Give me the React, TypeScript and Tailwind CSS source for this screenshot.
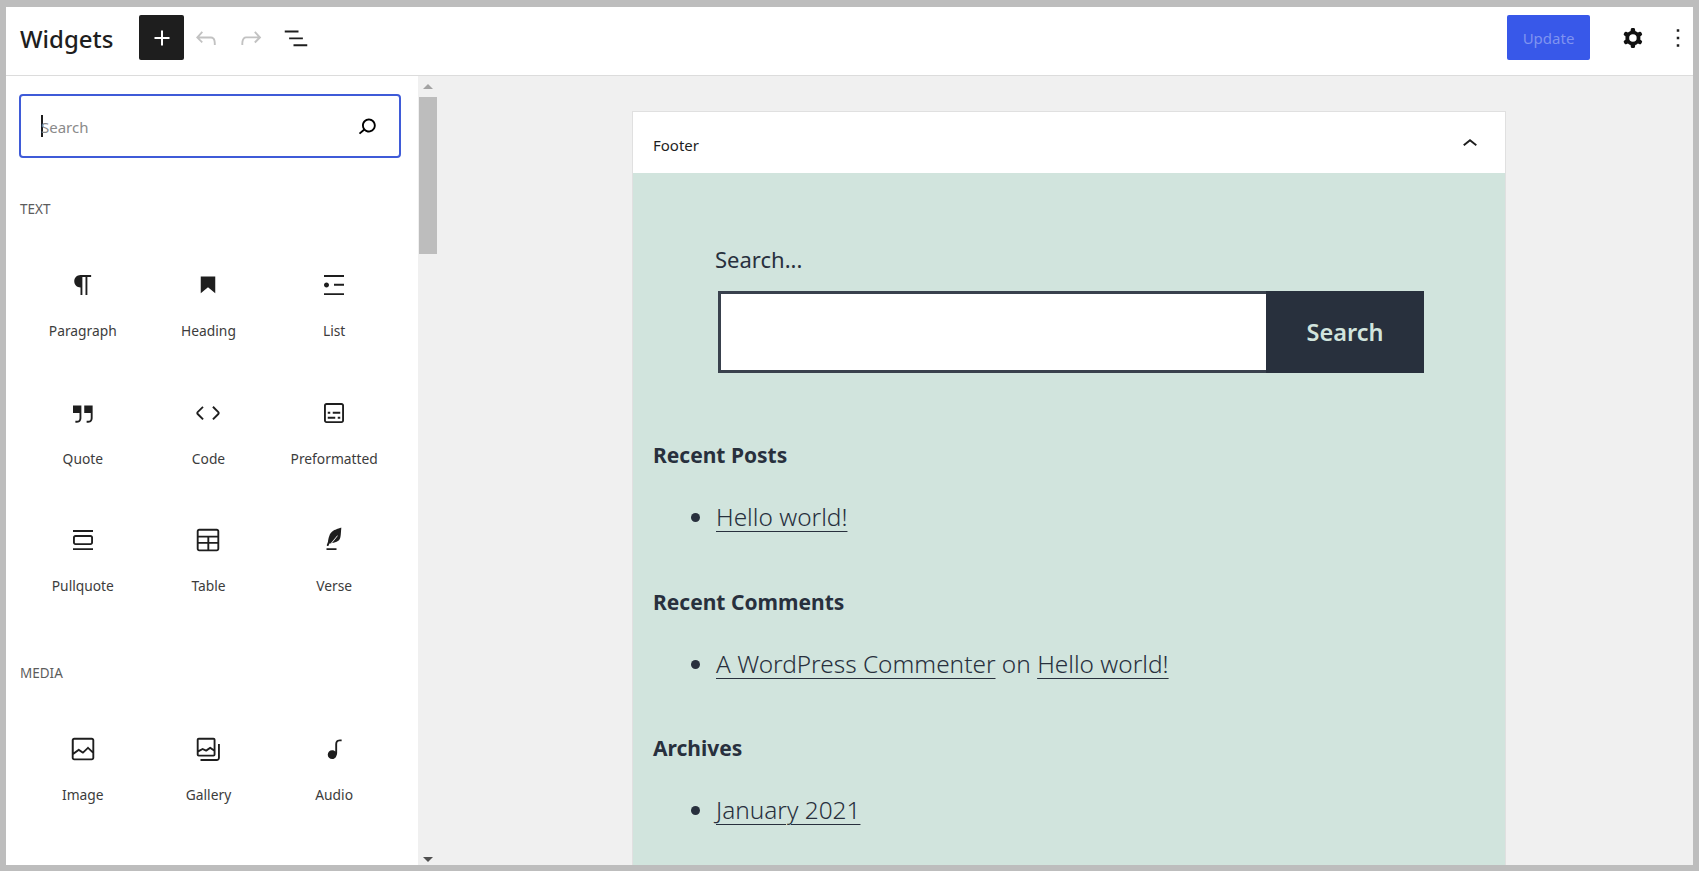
import type { ReactNode } from 'react';

const font = { ui: "font-['Noto_Sans','Liberation_Sans',sans-serif]" };

function Icon({ d, className = 'fill-[#1e1e1e]', evenodd }: { d: string; className?: string; evenodd?: boolean }) {
  return (
    <svg viewBox="0 0 24 24" className={`h-[30px] w-[30px] shrink-0 ${className}`}>
      <path d={d} fillRule={evenodd ? 'evenodd' : undefined} clipRule={evenodd ? 'evenodd' : undefined} />
    </svg>
  );
}

const icons = {
  plus: 'M18 11.2h-5.2V6h-1.6v5.2H6v1.6h5.2V18h1.6v-5.2H18z',
  undo: 'M18.3 11.7c-.6-.6-1.4-.9-2.3-.9H6.7l2.9-3.3-1.1-1-4.5 5L8.5 16l1-1-2.7-2.7H16c.5 0 .9.2 1.3.5 1 1 1 3.4 1 4.5v.3h1.5v-.2c0-1.5 0-4.3-1.5-5.7z',
  redo: 'M15.6 6.5l-1.1 1 2.9 3.3H8c-.9 0-1.7.3-2.3.9-1.4 1.5-1.4 4.2-1.4 5.6v.2h1.5v-.3c0-1.1 0-3.5 1-4.5.3-.3.7-.5 1.3-.5h9.2L14.5 15l1.1 1.1 4.6-4.6-4.6-5z',
  listView: 'M3 6h11v1.5H3V6Zm3.5 5.5h11V13h-11v-1.5ZM21 17H10v1.5h11V17Z',
  gear: 'M10.289 4.836A1 1 0 0 1 11.275 4h1.306a1 1 0 0 1 .987.836l.244 1.466c.787.26 1.503.679 2.108 1.218l1.393-.522a1 1 0 0 1 1.216.437l.653 1.13a1 1 0 0 1-.23 1.273l-1.148.944a6.025 6.025 0 0 1 0 2.435l1.149.946a1 1 0 0 1 .23 1.272l-.653 1.13a1 1 0 0 1-1.216.437l-1.394-.522c-.605.54-1.32.958-2.108 1.218l-.244 1.466a1 1 0 0 1-.987.836h-1.306a1 1 0 0 1-.986-.836l-.244-1.466a5.995 5.995 0 0 1-2.108-1.218l-1.394.522a1 1 0 0 1-1.217-.436l-.653-1.131a1 1 0 0 1 .23-1.272l1.149-.946a6.026 6.026 0 0 1 0-2.435l-1.148-.944a1 1 0 0 1-.23-1.272l.653-1.131a1 1 0 0 1 1.217-.437l1.393.522a5.994 5.994 0 0 1 2.108-1.218l.244-1.466ZM14.929 12a3 3 0 1 1-6 0 3 3 0 0 1 6 0Z',
  more: 'M13 19h-2v-2h2v2zm0-6h-2v-2h2v2zm0-6h-2V5h2v2z',
  search: 'M13.5 6C10.5 6 8 8.5 8 11.5c0 1.1.3 2.1.9 3l-3.4 3 1 1.1 3.4-2.9c1 .9 2.2 1.4 3.6 1.4 3 0 5.5-2.5 5.5-5.5C19 8.5 16.5 6 13.5 6zm0 9.5c-2.2 0-4-1.8-4-4s1.8-4 4-4 4 1.8 4 4-1.8 4-4 4z',
  chevronUp: 'M6.5 12.4L12 8l5.5 4.4-.9 1.2L12 10l-4.5 3.6-1-1.2z',
  paragraph: 'm9.99609 14v-.2251l.00391.0001v6.225h1.5v-14.5h2.5v14.5h1.5v-14.5h3v-1.5h-8.50391c-2.76142 0-5 2.23858-5 5 0 2.7614 2.23858 5 5 5z',
  heading: 'M6.2 5.2v13.4l5.8-4.8 5.8 4.8V5.2z',
  list: 'M4 4v1.5h16V4H4zm8 8.5h8V11h-8v1.5zM4 20h16v-1.5H4V20zm4-8c0-1.1-.9-2-2-2s-2 .9-2 2 .9 2 2 2 2-.9 2-2z',
  quote: 'M13 6v6h5.2v4c0 .8-.2 1.4-.5 1.7-.6.6-1.6.6-2.5.5h-.3v1.5h.5c1 0 2.3-.1 3.3-1 .6-.6 1-1.6 1-2.8V6H13zm-9 6h5.2v4c0 .8-.2 1.4-.5 1.7-.6.6-1.6.6-2.5.5h-.3v1.5h.5c1 0 2.3-.1 3.3-1 .6-.6 1-1.6 1-2.8V6H4v6z',
  code: 'M20.8 10.7l-4.3-4.3-1.1 1.1 4.3 4.3c.1.1.1.3 0 .4l-4.3 4.3 1.1 1.1 4.3-4.3c.7-.8.7-1.9 0-2.6zM4.2 11.8l4.3-4.3-1-1-4.3 4.3c-.7.7-.7 1.8 0 2.5l4.3 4.3 1.1-1.1-4.3-4.3c-.2-.1-.2-.3-.1-.4z',
  preformatted: 'M18 4H6c-1.1 0-2 .9-2 2v12c0 1.1.9 2 2 2h12c1.1 0 2-.9 2-2V6c0-1.1-.9-2-2-2zm.5 14c0 .3-.2.5-.5.5H6c-.3 0-.5-.2-.5-.5V6c0-.3.2-.5.5-.5h12c.3 0 .5.2.5.5v12zM7 16.5h6V15H7v1.5zm4-4h6V11h-6v1.5zM9 11H7v1.5h2V11zm6 5.5h2V15h-2v1.5z',
  pullquote: 'M18 8H6c-1.1 0-2 .9-2 2v4c0 1.1.9 2 2 2h12c1.1 0 2-.9 2-2v-4c0-1.1-.9-2-2-2zm.5 6c0 .3-.2.5-.5.5H6c-.3 0-.5-.2-.5-.5v-4c0-.3.2-.5.5-.5h12c.3 0 .5.2.5.5v4zM4 4v1.5h16V4H4zm0 16h16v-1.5H4V20z',
  table: 'M19 3H5c-1.1 0-2 .9-2 2v14c0 1.1.9 2 2 2h14c1.1 0 2-.9 2-2V5c0-1.1-.9-2-2-2zM5 4.5h14c.3 0 .5.2.5.5v3.5h-15V5c0-.3.2-.5.5-.5zm8 5.5h6.5v3.5H13V10zm-1.5 3.5h-7V10h7v3.5zm-7 5.5v-4h7v4.5H5c-.3 0-.5-.2-.5-.5zm14.5.5h-6V15h6.5v4c0 .3-.2.5-.5.5z',
  verse: 'M17.8 2l-.9.3c-.1 0-3.6 1-5.2 2.1C10 5.5 9.3 6.5 8.9 7.1c-.6.9-1.7 4.7-1.7 6.3l-.9 2.3c-.2.4 0 .8.4 1 .1 0 .2.1.3.1.3 0 .6-.2.7-.5l.6-1.5c.3 0 .7-.1 1.2-.2.7-.1 1.4-.3 2.2-.5.8-.2 1.6-.5 2.4-.8.7-.3 1.4-.7 1.9-1.2s.8-1.2 1-1.9c.2-.7.3-1.6.4-2.4.1-.8.1-1.7.2-2.5 0-.8.1-1.5.2-2.1V2zM9.6 14.4l5-6.1.5.4-5 6.1zM6 20h8v-1.5H6V20z',
  image: 'M19 3H5c-1.1 0-2 .9-2 2v14c0 1.1.9 2 2 2h14c1.1 0 2-.9 2-2V5c0-1.1-.9-2-2-2zM5 4.5h14c.3 0 .5.2.5.5v8.4l-3-2.9c-.3-.3-.8-.3-1 0L11.9 14 9 12c-.3-.2-.6-.2-.8 0l-3.6 2.6V5c-.1-.3.1-.5.4-.5zm14 15H5c-.3 0-.5-.2-.5-.5v-2.4l4.1-3 3 1.9c.3.2.7.2.9-.1L16 12l3.5 3.4V19c0 .3-.2.5-.5.5z',
  gallery: 'M16.375 4.5H4.625a.125.125 0 0 0-.125.125v8.254l2.859-1.54a.75.75 0 0 1 .68-.016l2.384 1.142 2.89-2.074a.75.75 0 0 1 .874 0l2.313 1.66V4.625a.125.125 0 0 0-.125-.125Zm.125 9.398-2.75-1.975-2.813 2.02a.75.75 0 0 1-.76.067l-2.444-1.17L4.5 14.583v1.792c0 .069.056.125.125.125h11.75a.125.125 0 0 0 .125-.125v-2.477ZM4.625 3C3.728 3 3 3.728 3 4.625v11.75C3 17.273 3.728 18 4.625 18h11.75c.898 0 1.625-.727 1.625-1.625V4.625C18 3.728 17.273 3 16.375 3H4.625ZM20 8v11c0 .69-.31 1-.999 1H6v1.5h13.001c1.52 0 2.499-.982 2.499-2.5V8H20Z',
  audio: 'M17.7 4.3c-1.2 0-2.8 0-3.8 1-.6.6-.9 1.5-.9 2.6V14c-.6-.6-1.5-1-2.5-1C8.6 13 7 14.6 7 16.5S8.6 20 10.5 20c1.5 0 2.8-1 3.3-2.3.5-.8.7-1.8.7-2.5V7.9c0-.7.2-1.2.5-1.6.6-.6 1.8-.6 2.8-.6h.3V4.3h-.4z',
};

const textBlocks = [
  { name: 'Paragraph', d: icons.paragraph },
  { name: 'Heading', d: icons.heading },
  { name: 'List', d: icons.list },
  { name: 'Quote', d: icons.quote },
  { name: 'Code', d: icons.code },
  { name: 'Preformatted', d: icons.preformatted },
  { name: 'Pullquote', d: icons.pullquote },
  { name: 'Table', d: icons.table },
  { name: 'Verse', d: icons.verse },
];

const mediaBlocks = [
  { name: 'Image', d: icons.image },
  { name: 'Gallery', d: icons.gallery },
  { name: 'Audio', d: icons.audio },
];

function BlockGrid({ blocks }: { blocks: { name: string; d: string }[] }) {
  return (
    <div className="ml-px mt-[33px] grid w-[377px] grid-cols-3">
      {blocks.map((b) => (
        <div key={b.name} className="flex h-[127.5px] flex-col items-center pt-[18px]">
          <Icon d={b.d} evenodd={b.name === 'Gallery' || b.name === 'Verse'} />
          <span className="mt-[21px] text-[13.8px] leading-[20px] text-[#3c3c3c]">{b.name}</span>
        </div>
      ))}
    </div>
  );
}

function SectionLabel({ children, className = '' }: { children: ReactNode; className?: string }) {
  return <div className={`text-[13.5px] leading-[20px] uppercase text-[#5c5c5c] ${className}`}>{children}</div>;
}

function Sidebar() {
  return (
    <aside className="w-[412px] shrink-0 overflow-hidden bg-white pl-[13px] pt-[18px]">
      <div className="flex h-[64px] w-[382px] items-center rounded-[4px] border-2 border-[#3f5bd8] pl-[20px] pr-[17px]">
        <span className="-mr-[2px] h-[22px] w-[2px] shrink-0 bg-[#1e1e1e]" />
        <input
          placeholder="Search"
          className="mt-[2px] min-w-0 flex-1 bg-transparent text-[15px] outline-none placeholder:text-[#8a8a8a]"
        />
        <Icon d={icons.search} className="fill-black" />
      </div>
      <SectionLabel className="mt-[41px] pl-px">Text</SectionLabel>
      <BlockGrid blocks={textBlocks} />
      <SectionLabel className="mt-[28px] pl-px">Media</SectionLabel>
      <BlockGrid blocks={mediaBlocks} />
    </aside>
  );
}

function Scrollbar() {
  return (
    <div className="flex w-[20px] shrink-0 flex-col items-center bg-[#f0f0f0]">
      <div className="flex h-[21px] w-full items-center justify-center">
        <span className="h-0 w-0 border-x-[5px] border-b-[5px] border-x-transparent border-b-[#a3a3a3]" />
      </div>
      <div className="h-[157px] w-[18px] bg-[#bdbdbd]" />
      <div className="flex-1" />
      <div className="flex h-[12px] w-full items-center justify-center">
        <span className="h-0 w-0 border-x-[5px] border-t-[5px] border-x-transparent border-t-[#505050]" />
      </div>
    </div>
  );
}

function WidgetList({ children }: { children: ReactNode }) {
  return (
    <div className="mt-[29px] flex items-center text-[24.4px] font-light leading-[36px]">
      <span className="ml-[38px] mr-[16px] h-[9px] w-[9px] rounded-full bg-[#28303d]" />
      <div>{children}</div>
    </div>
  );
}

function WidgetLink({ children }: { children: ReactNode }) {
  return <a className="underline decoration-1 underline-offset-[5px]">{children}</a>;
}

function WidgetTitle({ children, className = '' }: { children: ReactNode; className?: string }) {
  return <h2 className={`text-[21px] font-bold leading-[30px] ${className}`}>{children}</h2>;
}

function FooterCard() {
  return (
    <div className="ml-[194px] w-[874px] border-x border-t border-[#e0e0e0] bg-white">
      <div className="flex h-[61px] items-center justify-between pl-[20px] pr-[20px]">
        <span className="mt-[5px] text-[15px] text-[#1e1e1e]">Footer</span>
        <Icon d={icons.chevronUp} className="mt-[3px] fill-[#1e1e1e]" />
      </div>
      <div className="h-[800px] bg-[#d1e4dd] px-[20px] pt-[71px] text-[#28303d]">
        <div className="pl-[62px] text-[22px] leading-[30px]">Search...</div>
        <div className="ml-[65px] mt-[17px] flex h-[82px] w-[706px]">
          <div className="flex-1 border-[3px] border-r-0 border-[#39414d] bg-white" />
          <button className="w-[158px] bg-[#28303d] pt-[2px] text-[23.5px] font-semibold text-[#d1e4dd]">Search</button>
        </div>
        <WidgetTitle className="mt-[67px]">Recent Posts</WidgetTitle>
        <WidgetList>
          <WidgetLink>Hello world!</WidgetLink>
        </WidgetList>
        <WidgetTitle className="mt-[52px]">Recent Comments</WidgetTitle>
        <WidgetList>
          <WidgetLink>A WordPress Commenter</WidgetLink> on <WidgetLink>Hello world!</WidgetLink>
        </WidgetList>
        <WidgetTitle className="mt-[51px]">Archives</WidgetTitle>
        <WidgetList>
          <WidgetLink>January 2021</WidgetLink>
        </WidgetList>
      </div>
    </div>
  );
}

export default function App() {
  return (
    <div className={`flex h-screen w-full flex-col overflow-hidden border-x-[6px] border-b-[6px] border-t-[7px] border-[#bdbdbd] bg-white ${font.ui}`}>
      <header className="flex h-[69px] shrink-0 items-center border-b border-[#dcdcdc] pb-[7px]">
        <h1 className="ml-[14px] mt-[2px] w-[119px] text-[24px] font-medium leading-none text-[#1e1e1e]">Widgets</h1>
        <button className="flex h-[45px] w-[45px] items-center justify-center rounded-[2px] bg-[#1e1e1e]">
          <Icon d={icons.plus} className="fill-white" />
        </button>
        <div className="ml-[7px] flex items-center gap-[15px]">
          <Icon d={icons.undo} className="fill-[#c2c2c2]" />
          <Icon d={icons.redo} className="fill-[#c2c2c2]" />
          <Icon d={icons.listView} className="fill-[#1e1e1e]" />
        </div>
        <button className="ml-auto h-[45px] w-[83px] rounded-[2px] bg-[#3858e9] pt-[2px] text-[15px] text-[#7f93f0]">Update</button>
        <div className="ml-[28px] flex items-center gap-[15px]">
          <Icon d={icons.gear} className="fill-[#111]" evenodd />
          <Icon d={icons.more} className="fill-[#1e1e1e]" />
        </div>
      </header>
      <div className="flex min-h-0 flex-1">
        <Sidebar />
        <Scrollbar />
        <main className="min-w-0 flex-1 overflow-hidden bg-[#f0f0f0] pt-[35px]">
          <FooterCard />
        </main>
      </div>
    </div>
  );
}
